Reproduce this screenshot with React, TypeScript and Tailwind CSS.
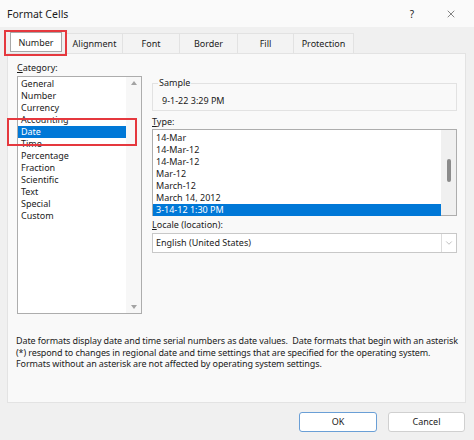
import { ChevronDown, X } from "lucide-react";

const categories = [
  "General",
  "Number",
  "Currency",
  "Accounting",
  "Date",
  "Time",
  "Percentage",
  "Fraction",
  "Scientific",
  "Text",
  "Special",
  "Custom",
];

const types = [
  "14-Mar",
  "14-Mar-12",
  "14-Mar-12",
  "Mar-12",
  "March-12",
  "March 14, 2012",
  "3-14-12 1:30 PM",
];

const tabs = [
  { label: "Alignment", w: "w-[56px]" },
  { label: "Font", w: "w-[57px]" },
  { label: "Border", w: "w-[58px]" },
  { label: "Fill", w: "w-[56px]" },
  { label: "Protection", w: "w-[60px]" },
];

const App = () => {
  return (
    <div className="relative w-[474px] h-[440px] overflow-hidden bg-[#f0f0f0] flex flex-col font-['Noto_Sans',sans-serif] text-[9px] text-[#1b1b1b]">
      {/* Title bar */}
      <div className="h-[27px] shrink-0 bg-[#fafafa] flex items-center pl-[7px] pr-[17px] pt-[1px]">
        <span className="text-[10.5px] leading-none">Format Cells</span>
        <span className="ml-auto text-[10px] leading-none mr-[31px]">?</span>
        <X size={12} strokeWidth={1.2} className="text-[#333]" />
      </div>

      {/* Tabs */}
      <div className="h-[26px] shrink-0 flex items-end pl-[10px]">
        <div className="w-[52px] h-[20px] mb-[1px] pt-[1px] bg-white border border-[#a8a8a8] flex items-center justify-center">
          Number
        </div>
        <div className="flex ml-[4px] border-l border-[#e2e2e2]">
          {tabs.map((t) => (
            <div
              key={t.label}
              className={`${t.w} h-[20px] pt-[1px] bg-[#f3f3f3] border-r border-t border-[#e2e2e2] flex items-center justify-center`}
            >
              {t.label}
            </div>
          ))}
        </div>
      </div>

      {/* Panel */}
      <div className="ml-[7px] w-[459px] h-[350px] shrink-0 bg-[#f9f9f9] border border-[#e3e3e3] flex flex-col pt-[8px]">
        <div className="flex pl-[9px] gap-[10px]">
          {/* Category */}
          <div className="w-[125px] flex flex-col">
            <div className="h-[12px] leading-[12px] mb-[2px]">
              <span className="underline">C</span>ategory:
            </div>
            <div className="h-[238px] bg-white border border-[#adadad] flex">
              <div className="flex-1 flex flex-col pt-[1px]">
                {categories.map((c) => (
                  <div
                    key={c}
                    className={`h-[12px] leading-[12px] pl-[3px] ${
                      c === "Date" ? "bg-[#0078d7] text-white" : ""
                    }`}
                  >
                    {c}
                  </div>
                ))}
              </div>
              <div className="w-[15px] bg-[#f7f7f7] flex flex-col items-center justify-between py-[4px]">
                <div className="w-0 h-0 border-l-[3.5px] border-r-[3.5px] border-b-[4px] border-l-transparent border-r-transparent border-b-[#a3a3a3]" />
                <div className="w-0 h-0 border-l-[3.5px] border-r-[3.5px] border-t-[4px] border-l-transparent border-r-transparent border-t-[#a3a3a3]" />
              </div>
            </div>
          </div>

          {/* Right column */}
          <div className="w-[305px] flex flex-col">
            <fieldset className="mt-[15px] border border-[#e2e2e2] px-[9px] pb-[3px]">
              <legend className="ml-[-4px] px-[1px] h-[12px] leading-[12px]">Sample</legend>
              <div className="mt-[6px] h-[12px] leading-[12px]">9-1-22 3:29 PM</div>
            </fieldset>

            <div className="mt-[5px] h-[12px] leading-[12px] mb-[1px]">
              <span className="underline">T</span>ype:
            </div>
            <div className="h-[87px] bg-white border border-[#adadad] flex">
              <div className="flex-1 flex flex-col pt-[2px]">
                {types.map((t, i) => (
                  <div
                    key={i}
                    className={`h-[12px] leading-[12px] pl-[3px] ${
                      i === types.length - 1 ? "bg-[#0078d7] text-white" : ""
                    }`}
                  >
                    {t}
                  </div>
                ))}
              </div>
              <div className="w-[15px] bg-[#f0f0f0] flex justify-center pt-[29px]">
                <div className="w-[4px] h-[23px] rounded-[2px] bg-[#8b8b8b]" />
              </div>
            </div>

            <div className="mt-[3px] h-[12px] leading-[12px] mb-[2px]">
              <span className="underline">L</span>ocale (location):
            </div>
            <div className="h-[20px] bg-white border border-[#c8c8c8] flex items-center">
              <span className="flex-1 pl-[3px]">English (United States)</span>
              <div className="w-[15px] h-full border-l border-[#dcdcdc] flex items-center justify-center">
                <ChevronDown size={10} strokeWidth={1.3} className="text-[#8a8a8a]" />
              </div>
            </div>
          </div>
        </div>

        <p className="mt-[21px] pl-[8px] leading-[11.7px] whitespace-nowrap tracking-[-0.11px]">
          Date formats display date and time serial numbers as date values.&nbsp; Date formats that begin with an asterisk
          <br />
          (*) respond to changes in regional date and time settings that are specified for the operating system.
          <br />
          Formats without an asterisk are not affected by operating system settings.
        </p>
      </div>

      {/* Buttons */}
      <div className="flex justify-end gap-[11px] pr-[9px] mt-[9px]">
        <button className="w-[78px] h-[20px] bg-white border border-[#6a9fd6] rounded-[3px]">OK</button>
        <button className="w-[77px] h-[20px] bg-white border border-[#d0d0d0] rounded-[3px]">Cancel</button>
      </div>

      {/* Red annotation boxes */}
      <div className="absolute left-[4px] top-[30px] w-[63px] h-[26px] border-2 border-[#e5383e]" />
      <div className="absolute left-[7px] top-[118px] w-[130px] h-[28px] border-2 border-[#e5383e]" />
    </div>
  );
};

export default App;
